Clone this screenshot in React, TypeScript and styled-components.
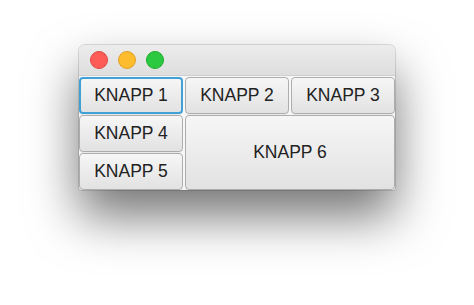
import React from "react";
import styled, { createGlobalStyle } from "styled-components";

const Global = createGlobalStyle`
  html, body { margin: 0; padding: 0; background: #ffffff; }
  body { font-family: "Liberation Sans", Arial, sans-serif; }
`;

const Stage = styled.div`
  width: 474px;
  height: 305px;
  box-sizing: border-box;
  padding: 45px 0 0 79px;
  overflow: hidden;
`;

const Window = styled.div`
  width: 316px;
  display: flex;
  flex-direction: column;
  border-radius: 6px 6px 3px 3px;
  background: #f4f4f4;
  box-shadow: 0 0 0 1px rgba(0, 0, 0, 0.12), 0 26px 50px rgba(0, 0, 0, 0.55);
  overflow: hidden;
`;

const TitleBar = styled.div`
  height: 31px;
  box-sizing: border-box;
  display: flex;
  align-items: center;
  gap: 10px;
  padding: 0 0 0 11px;
  background: linear-gradient(#ececec, #dedede);
  border-bottom: 1px solid #cfcfcf;
`;

const Light = styled.span<{ $c: string; $b: string }>`
  width: 18px;
  height: 18px;
  border-radius: 50%;
  box-sizing: border-box;
  background: ${(p) => p.$c};
  border: 1px solid ${(p) => p.$b};
`;

const Grid = styled.div`
  display: grid;
  grid-template-columns: repeat(3, 104px);
  grid-template-rows: 37px 37px 37px;
  column-gap: 2px;
  row-gap: 1px;
  padding-top: 1px;
  background: #f7f7f7;
`;

const Button = styled.button<{ $focus?: boolean; $col?: string; $row?: string }>`
  grid-column: ${(p) => p.$col || "auto"};
  grid-row: ${(p) => p.$row || "auto"};
  margin: 0;
  padding: 0;
  box-sizing: border-box;
  font-family: "Liberation Sans", Arial, sans-serif;
  font-size: 17.5px;
  color: #222222;
  border-radius: 4px;
  border: ${(p) => (p.$focus ? "2px solid #3fa1d6" : "1px solid #adadad")};
  background: linear-gradient(#f6f6f6, #e2e2e2);
  box-shadow: 0 1px 0 rgba(0, 0, 0, 0.06);
  display: flex;
  align-items: center;
  justify-content: center;
  cursor: default;
`;

export default function App() {
  return (
    <>
      <Global />
      <Stage>
        <Window>
          <TitleBar>
            <Light $c="#fd5d56" $b="#e2463f" />
            <Light $c="#fdbb2e" $b="#e0a028" />
            <Light $c="#2ac940" $b="#1eac2c" />
          </TitleBar>
          <Grid>
            <Button $focus>KNAPP 1</Button>
            <Button>KNAPP 2</Button>
            <Button>KNAPP 3</Button>
            <Button>KNAPP 4</Button>
            <Button $col="2 / 4" $row="2 / 4">KNAPP 6</Button>
            <Button>KNAPP 5</Button>
          </Grid>
        </Window>
      </Stage>
    </>
  );
}
